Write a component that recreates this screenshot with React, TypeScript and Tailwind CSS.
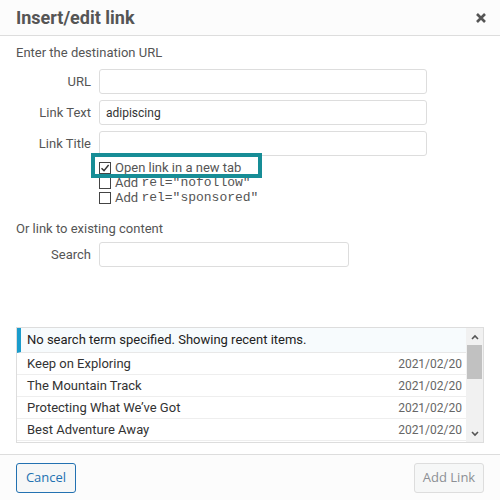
import React from 'react';

const items = [
  { title: 'Keep on Exploring', date: '2021/02/20' },
  { title: 'The Mountain Track', date: '2021/02/20' },
  { title: 'Protecting What We’ve Got', date: '2021/02/20' },
  { title: 'Best Adventure Away', date: '2021/02/20' },
];

function Field({ label, value }: { label: string; value?: string }) {
  return (
    <div className="flex items-center h-[25px]">
      <span className="w-[99px] pr-[8px] text-right text-[13px] text-[#555]">{label}</span>
      <div className="w-[328px] h-[25px] border border-[#ddd] rounded-[3px] bg-white flex items-center px-[6px] text-[12px] text-[#333]">
        {value}
      </div>
    </div>
  );
}

function Check({ checked, children }: { checked?: boolean; children: React.ReactNode }) {
  return (
    <div className="flex items-center h-[15px] pl-[99px] text-[13px] text-[#555] leading-none">
      <span className="w-[12px] h-[12px] border border-[#444] bg-white mr-[4px] flex items-center justify-center shrink-0">
        {checked && (
          <svg width="10" height="10" viewBox="0 0 10 10">
            <path d="M1.5 5.2 L4 7.6 L8.6 2" fill="none" stroke="#333" strokeWidth="1.4" />
          </svg>
        )}
      </span>
      {children}
    </div>
  );
}

export default function App() {
  return (
    <div className="w-[500px] h-[500px] bg-white flex flex-col relative overflow-hidden" style={{ fontFamily: 'Roboto, "Liberation Sans", sans-serif' }}>
      {/* Header */}
      <div className="h-[36px] shrink-0 bg-[#fcfcfc] border-b border-[#ddd] flex items-center justify-between pl-[16px] pr-[13px]">
        <h1 className="text-[18px] font-bold text-[#555]">Insert/edit link</h1>
        <svg width="12" height="12" viewBox="0 0 12 12">
          <path d="M2 2 L10 10 M10 2 L2 10" stroke="#555" strokeWidth="2.6" />
        </svg>
      </div>

      {/* Body */}
      <div className="flex flex-col">
        <p className="mt-[8px] pl-[16px] text-[13px] leading-[18px] text-[#555]">Enter the destination URL</p>
        <div className="mt-[7px] flex flex-col gap-[6px]">
          <Field label="URL" />
          <Field label="Link Text" value="adipiscing" />
          <Field label="Link Title" />
        </div>
        <div className="mt-[4px] flex flex-col">
          <Check checked>Open link in a new tab</Check>
          <Check>
            Add&nbsp;<span style={{ fontFamily: '"Liberation Mono", monospace' }}>rel="nofollow"</span>
          </Check>
          <Check>
            Add&nbsp;<span style={{ fontFamily: '"Liberation Mono", monospace' }}>rel="sponsored"</span>
          </Check>
        </div>
        <p className="mt-[15px] pl-[16px] text-[13px] leading-[18px] text-[#555]">Or link to existing content</p>
        <div className="mt-[4px] flex items-center h-[25px]">
          <span className="w-[99px] pr-[8px] text-right text-[13px] text-[#555]">Search</span>
          <div className="w-[250px] h-[25px] border border-[#ddd] rounded-[3px] bg-white" />
        </div>

        {/* Results */}
        <div className="mt-[60px] mx-[16px] h-[116px] border border-[#ddd] flex">
          <div className="flex-1 flex flex-col">
            <div className="h-[25px] bg-[#f7fbfd] border-l-[4px] border-[#1a9ccc] border-b border-b-[#e8e8e8] flex items-center pl-[6px] text-[13px] text-[#222]">
              No search term specified. Showing recent items.
            </div>
            {items.map((it) => (
              <div key={it.title} className="h-[22px] border-b border-[#eee] flex items-center justify-between pl-[10px] pr-[4px]">
                <span className="text-[13px] text-[#333]">{it.title}</span>
                <span className="text-[12px] text-[#666]">{it.date}</span>
              </div>
            ))}
          </div>
          <div className="w-[17px] bg-[#f1f1f1] flex flex-col items-center">
            <div className="h-[17px] flex items-center justify-center">
              <svg width="8" height="6" viewBox="0 0 8 6"><path d="M1 5 L4 2 L7 5" fill="none" stroke="#555" strokeWidth="1.6" /></svg>
            </div>
            <div className="w-[15px] h-[34px] bg-[#c1c1c1]" />
            <div className="flex-1" />
            <div className="h-[17px] flex items-center justify-center">
              <svg width="8" height="6" viewBox="0 0 8 6"><path d="M1 1 L4 4 L7 1" fill="none" stroke="#555" strokeWidth="1.6" /></svg>
            </div>
          </div>
        </div>
      </div>

      {/* Footer */}
      <div className="mt-[11px] flex-1 bg-[#fcfcfc] border-t border-[#ddd] flex justify-between items-start px-[16px] pt-[8px]" style={{ fontFamily: '"Open Sans", "Liberation Sans", sans-serif' }}>
        <button className="w-[60px] h-[30px] border border-[#2271b1] rounded-[3px] bg-[#f6f7f7] text-[13px] text-[#2271b1]">Cancel</button>
        <button className="w-[70px] h-[30px] border border-[#ddd] rounded-[3px] bg-[#f6f7f7] text-[13px] text-[#8c8f94]">Add Link</button>
      </div>

      {/* Highlight annotation */}
      <div className="absolute left-[91px] top-[153px] w-[171px] h-[25px] border-[4px] border-[#178d96]" />
    </div>
  );
}
